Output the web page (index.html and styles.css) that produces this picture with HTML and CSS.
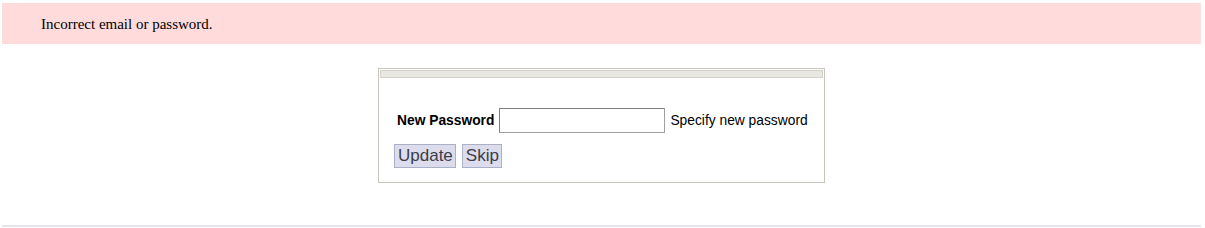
FILE: index.html
```html
<!DOCTYPE html>
<html lang="en">
<head>
    <meta charset="UTF-8">
    <title>Change Password</title>
    <link rel="stylesheet" href="styles.css">
</head>
<body>

<div class="page">
    <div class="alert">Incorrect email or password.</div>

    <form class="panel" onsubmit="return false;">
        <div class="panel-head"></div>
        <div class="panel-body">
            <div class="field">
                <label class="label" for="newpass">New Password</label>
                <input class="input" type="password" id="newpass">
                <span class="hint">Specify new password</span>
            </div>
            <div class="actions">
                <button class="btn" type="submit">Update</button>
                <button class="btn" type="button">Skip</button>
            </div>
        </div>
    </form>

    <div class="footer-line"></div>
</div>

</body>
</html>
```

FILE: styles.css
```css
body {
    margin: 0;
    background-color: #ffffff;
    font-family: "Liberation Sans", Arial, sans-serif;
}
.page {
    padding: 3px 4px 0 2px;
}
.alert {
    background-color: #ffdbdb;
    height: 41px;
    line-height: 43px;
    padding-left: 39px;
    font-family: "Liberation Serif", "Times New Roman", serif;
    font-size: 15px;
    color: #000000;
}
.panel {
    width: 443px;
    margin: 24px auto 0;
    border: 1px solid #c8c5be;
    padding: 1px;
}
.panel-head {
    height: 6px;
    border: 1px solid #d3d0c9;
    background-color: #e9e7e2;
}
.panel-body {
    padding: 30px 0 13px 14px;
}
.field {
    display: flex;
    align-items: center;
    padding-left: 3px;
}
.label {
    font-size: 13.8px;
    font-weight: bold;
    color: #000000;
    margin-right: 5px;
}
.input {
    box-sizing: border-box;
    width: 166px;
    height: 25px;
    margin: 0;
    border: 1px solid #a0a0a0;
    border-top-color: #808080;
    border-left-color: #808080;
    background: #ffffff;
}
.hint {
    font-size: 13.8px;
    color: #000000;
    margin-left: 5px;
}
.actions {
    display: flex;
    gap: 6px;
    margin-top: 11px;
}
.btn {
    height: 24px;
    padding: 0 2px 0 3px;
    font-family: "Liberation Sans", Arial, sans-serif;
    font-size: 17px;
    color: #3c3c48;
    background-color: #dcdcec;
    border: 1px solid #aab0c6;
    cursor: pointer;
}
.footer-line {
    margin-top: 42px;
    height: 2px;
    background-color: #e4e3f0;
}
```
